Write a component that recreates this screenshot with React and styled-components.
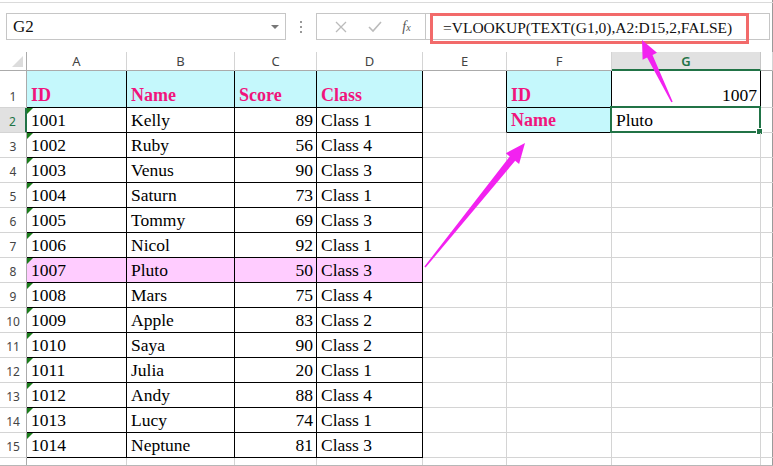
import React from "react";
import styled, { createGlobalStyle, css } from "styled-components";

const GlobalStyle = createGlobalStyle`
  html, body {
    margin: 0;
    padding: 0;
    background: #fff;
  }
  body {
    font-family: "Liberation Serif", "Times New Roman", serif;
  }
`;

const GREEN = "#217346";
const GRID = "#d4d4d4";
const HEAD_LINE = "#ababab";
const PINK_TEXT = "#f0157c";
const CYAN = "#c5f8fc";
const ROSE = "#ffccff";

const COLS = ["A", "B", "C", "D", "E", "F", "G"];
const WIDTHS = [27, 100, 108, 82, 106, 84, 105, 149];

const students = [
  ["1001", "Kelly", "89", "Class 1"],
  ["1002", "Ruby", "56", "Class 4"],
  ["1003", "Venus", "90", "Class 3"],
  ["1004", "Saturn", "73", "Class 1"],
  ["1005", "Tommy", "69", "Class 3"],
  ["1006", "Nicol", "92", "Class 1"],
  ["1007", "Pluto", "50", "Class 3"],
  ["1008", "Mars", "75", "Class 4"],
  ["1009", "Apple", "83", "Class 2"],
  ["1010", "Saya", "90", "Class 2"],
  ["1011", "Julia", "20", "Class 1"],
  ["1012", "Andy", "88", "Class 4"],
  ["1013", "Lucy", "74", "Class 1"],
  ["1014", "Neptune", "81", "Class 3"],
];

const Page = styled.div`
  position: relative;
  width: 773px;
  height: 466px;
  overflow: hidden;
  box-shadow: inset -1px 0 0 #9a9a9a;
`;

/* ---------- formula bar ---------- */

const Toolbar = styled.div`
  height: 50px;
  box-sizing: border-box;
  border-top: 1px solid #dadada;
  margin-top: 2px;
  padding: 10px 3px 0 6px;
  display: flex;
  align-items: flex-start;
`;

const NameBox = styled.div`
  width: 280px;
  height: 27px;
  box-sizing: border-box;
  border: 1px solid #c6c6c6;
  display: flex;
  align-items: center;
  justify-content: space-between;
  padding: 0 6px 0 6px;
  font-size: 17px;
  color: #111;
`;

const Caret = styled.span`
  width: 0;
  height: 0;
  border-left: 4px solid transparent;
  border-right: 4px solid transparent;
  border-top: 4px solid #777;
`;

const Dots = styled.div`
  width: 30px;
  height: 27px;
  display: flex;
  flex-direction: column;
  align-items: center;
  justify-content: center;
  gap: 3px;

  span {
    width: 2px;
    height: 2px;
    background: #999;
  }
`;

const FnBox = styled.div`
  width: 110px;
  height: 27px;
  box-sizing: border-box;
  border: 1px solid #c6c6c6;
  display: flex;
  align-items: center;
  justify-content: space-around;
  padding: 0 4px 0 8px;
`;

const Fx = styled.span`
  font-family: "Liberation Serif", serif;
  font-style: italic;
  font-size: 14px;
  color: #555;
  sub {
    font-size: 10px;
    vertical-align: 0;
  }
`;

const FormulaInput = styled.div`
  flex: 1;
  height: 27px;
  box-sizing: border-box;
  border: 1px solid #c6c6c6;
  border-left: none;
  display: flex;
  align-items: center;
  padding: 3px 0 0 17px;
  font-size: 15.5px;
  color: #111;
  white-space: nowrap;
`;

/* ---------- sheet ---------- */

const Sheet = styled.div`
  height: 413px;
  overflow: hidden;
  display: grid;
  grid-template-columns: ${WIDTHS.map((w) => w + "px").join(" ")} 1fr;
  grid-template-rows: 19px 37px repeat(15, 25px);
`;

const BottomEdge = styled.div`
  height: 3px;
  background: linear-gradient(#b4b4b4, #c8c8c8);
`;

const Corner = styled.div`
  position: relative;
  border-right: 1px solid ${HEAD_LINE};
  border-bottom: 1px solid ${HEAD_LINE};
  &::after {
    content: "";
    position: absolute;
    right: 3px;
    bottom: 3px;
    border-left: 11px solid transparent;
    border-bottom: 11px solid #dcdcdc;
  }
`;

const ColHead = styled.div`
  box-sizing: border-box;
  display: flex;
  align-items: center;
  justify-content: center;
  font-family: "Noto Sans", "Open Sans", sans-serif;
  font-size: 13px;
  color: #444;
  border-right: 1px solid ${GRID};
  border-bottom: 1px solid ${HEAD_LINE};
  ${(p) =>
    p.$active &&
    css`
      background: #e1e1e1;
      color: ${GREEN};
      font-weight: 600;
      border-bottom: 2px solid ${GREEN};
      border-right-color: #c6c6c6;
    `}
`;

const RowHead = styled.div`
  box-sizing: border-box;
  display: flex;
  align-items: flex-end;
  justify-content: center;
  padding-bottom: 2px;
  font-family: "Noto Sans", "Open Sans", sans-serif;
  font-size: 12px;
  color: #444;
  border-right: 1px solid ${HEAD_LINE};
  border-bottom: 1px solid ${GRID};
  ${(p) =>
    p.$active &&
    css`
      background: #e1e1e1;
      color: ${GREEN};
      border-right: 2px solid ${GREEN};
    `}
`;

const Cell = styled.div`
  position: relative;
  box-sizing: border-box;
  display: flex;
  align-items: flex-end;
  justify-content: ${(p) => (p.$right ? "flex-end" : "flex-start")};
  padding: 0 3px 1px 4px;
  font-size: 17.5px;
  line-height: 21px;
  color: #000;
  white-space: nowrap;
  background: ${(p) => p.$fill || "transparent"};
  border-right: 1px solid ${(p) => (p.$edge ? "#000" : GRID)};
  border-bottom: 1px solid ${(p) => (p.$base ? "#000" : GRID)};
  ${(p) =>
    p.$head &&
    css`
      font-weight: bold;
      color: ${PINK_TEXT};
      font-size: 18px;
    `}
  ${(p) =>
    p.$flag &&
    css`
      &::before {
        content: "";
        position: absolute;
        top: 0;
        left: 0;
        border-top: 6px solid #1b7d1b;
        border-right: 6px solid transparent;
      }
    `}
`;

const Filler = styled.div`
  border-bottom: 1px solid ${GRID};
`;

const Selection = styled.div`
  position: absolute;
  top: -2px;
  left: -2px;
  right: -1px;
  bottom: -1px;
  border: 2px solid ${GREEN};
  pointer-events: none;

  &::after {
    content: "";
    position: absolute;
    right: -4px;
    bottom: -4px;
    width: 5px;
    height: 5px;
    background: ${GREEN};
    border: 1px solid #fff;
  }
`;

const Overlay = styled.svg`
  position: absolute;
  top: 0;
  left: 0;
  pointer-events: none;
`;

function buildRow(r) {
  const cells = COLS.map(() => ({ text: "" }));
  if (r === 1) {
    ["ID", "Name", "Score", "Class"].forEach((t, i) => {
      cells[i] = { text: t, head: true, fill: CYAN };
    });
    cells[5] = { text: "ID", head: true, fill: CYAN };
    cells[6] = { text: "1007", right: true };
  } else if (r >= 2 && r <= 15) {
    const [id, name, score, cls] = students[r - 2];
    const fill = id === "1007" ? ROSE : undefined;
    cells[0] = { text: id, flag: true, fill };
    cells[1] = { text: name, fill };
    cells[2] = { text: score, right: true, fill };
    cells[3] = { text: cls, fill };
  }
  if (r === 2) {
    cells[5] = { text: "Name", head: true, fill: CYAN };
    cells[6] = { text: "Pluto", selected: true };
  }
  return cells.map((c, i) => {
    const inTable = r <= 15 && i <= 3;
    const inLookup = r <= 2 && i >= 5;
    return {
      ...c,
      edge: inTable || inLookup || (r <= 2 && i === 4),
      base: inTable || inLookup,
    };
  });
}

// row 16 is only a sliver at the bottom edge, its number is out of view
const rows = Array.from({ length: 16 }, (_, k) => k + 1);

function Arrow({ tail, tip, head = 20, wing = 8.5, neck = 3.5, end = 0.8 }) {
  const dx = tip[0] - tail[0];
  const dy = tip[1] - tail[1];
  const len = Math.hypot(dx, dy);
  const ux = dx / len;
  const uy = dy / len;
  const nx = -uy;
  const ny = ux;
  const bx = tip[0] - ux * head;
  const by = tip[1] - uy * head;
  const pts = [
    [tail[0] + nx * end, tail[1] + ny * end],
    [bx + nx * neck, by + ny * neck],
    [bx + nx * wing, by + ny * wing],
    tip,
    [bx - nx * wing, by - ny * wing],
    [bx - nx * neck, by - ny * neck],
    [tail[0] - nx * end, tail[1] - ny * end],
  ];
  return (
    <polygon
      points={pts.map((p) => p.map((v) => v.toFixed(1)).join(",")).join(" ")}
      fill="#f222f0"
    />
  );
}

export default function App() {
  return (
    <Page>
      <GlobalStyle />
      <Toolbar>
        <NameBox>
          G2
          <Caret />
        </NameBox>
        <Dots>
          <span />
          <span />
          <span />
        </Dots>
        <FnBox>
          <svg width="12" height="12" viewBox="0 0 12 12">
            <path d="M1 1 L11 11 M11 1 L1 11" stroke="#bbb" strokeWidth="1.3" />
          </svg>
          <svg width="14" height="12" viewBox="0 0 14 12">
            <path d="M1 6 L5 10 L13 1" stroke="#bbb" strokeWidth="1.6" fill="none" />
          </svg>
          <Fx>
            f<sub>x</sub>
          </Fx>
        </FnBox>
        <FormulaInput>=VLOOKUP(TEXT(G1,0),A2:D15,2,FALSE)</FormulaInput>
      </Toolbar>

      <Sheet>
        <Corner />
        {COLS.map((c) => (
          <ColHead key={c} $active={c === "G"}>
            {c}
          </ColHead>
        ))}
        <ColHead />

        {rows.map((r) => (
          <React.Fragment key={r}>
            <RowHead $active={r === 2}>{r <= 15 ? r : ""}</RowHead>
            {buildRow(r).map((c, i) => (
              <Cell
                key={i}
                $fill={c.fill}
                $right={c.right}
                $head={c.head}
                $flag={c.flag}
                $edge={c.edge}
                $base={c.base}
              >
                {c.text}
                {c.selected && <Selection />}
              </Cell>
            ))}
            <Filler />
          </React.Fragment>
        ))}
      </Sheet>
      <BottomEdge />

      <Overlay width="773" height="466">
        <rect
          x="431.5"
          y="14.5"
          width="316"
          height="28"
          fill="none"
          stroke="#f26a6a"
          strokeWidth="3"
        />
        <Arrow tail={[425, 267]} tip={[525, 143]} />
        <Arrow tail={[672, 102]} tip={[642, 40]} head={18} wing={8} neck={3} />
      </Overlay>
    </Page>
  );
}
